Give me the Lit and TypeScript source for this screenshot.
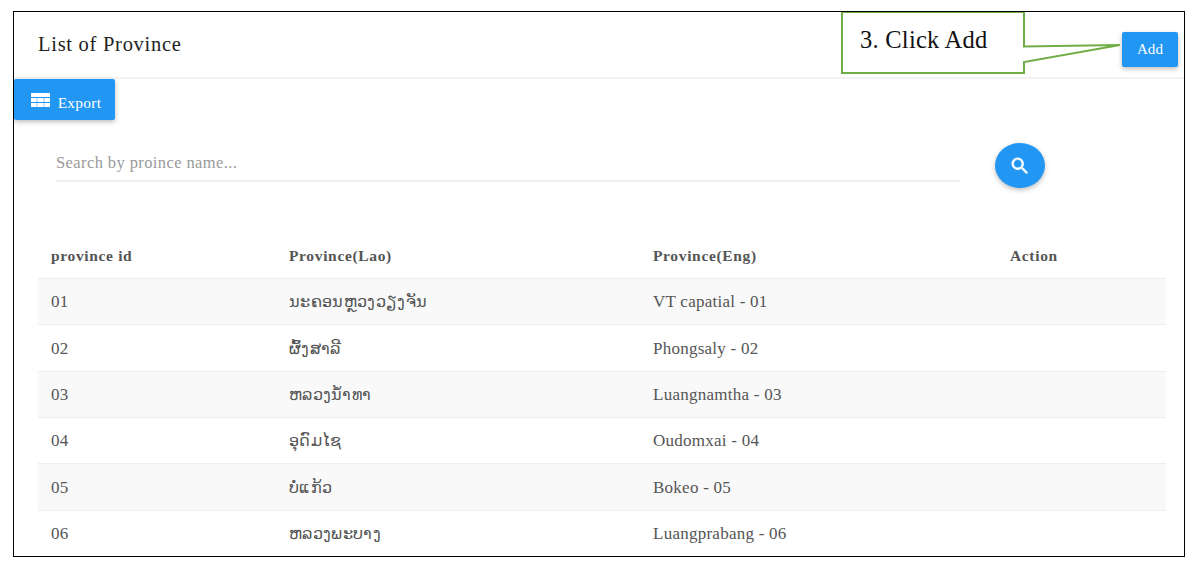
import { LitElement, html, css } from "lit";
import { customElement } from "lit/decorators.js";

const rows = [
  ["01", "ນະຄອນຫຼວງວຽງຈັນ", "VT capatial - 01"],
  ["02", "ຜົ້ງສາລີ", "Phongsaly - 02"],
  ["03", "ຫລວງນ້ຳທາ", "Luangnamtha - 03"],
  ["04", "ອຸດົມໄຊ", "Oudomxai - 04"],
  ["05", "ບໍ່ແກ້ວ", "Bokeo - 05"],
  ["06", "ຫລວງພະບາງ", "Luangprabang - 06"],
];

@customElement("app-root")
export class AppRoot extends LitElement {
  static styles = css`
    :host {
      display: block;
      box-sizing: border-box;
      width: 1197px;
      height: 570px;
      padding: 11px 12px 13px 13px;
      background: #fff;
      font-family: "Liberation Serif", "Noto Sans", serif;
      color: #555;
    }
    .frame {
      position: relative;
      box-sizing: border-box;
      height: 546px;
      border: 1px solid #000;
      overflow: hidden;
    }
    .header {
      box-sizing: border-box;
      height: 67px;
      border-bottom: 2px solid #f3f3f3;
      display: flex;
      align-items: center;
      justify-content: space-between;
      padding: 0 6px 0 24px;
    }
    .title {
      font-size: 20.5px;
      letter-spacing: 0.72px;
      color: #222;
    }
    .btn {
      background: #2196f3;
      color: #fff;
      border-radius: 2px;
      box-shadow: 0 2px 5px rgba(0, 0, 0, 0.26);
      font-family: inherit;
      display: flex;
      align-items: center;
      justify-content: center;
      box-sizing: border-box;
    }
    .add {
      width: 56px;
      height: 35px;
      padding-top: 1px;
      font-size: 15px;
      letter-spacing: 0.1px;
      font-weight: 500;
      margin-top: 9px;
    }
    .export {
      width: 101px;
      height: 41px;
      padding-left: 3px;
      font-size: 15.5px;
      letter-spacing: 0.25px;
      gap: 8px;
    }
    .export span {
      position: relative;
      top: 3px;
    }
    .export svg {
      width: 19px;
      height: 14px;
      position: relative;
      top: 0;
    }
    .search {
      display: flex;
      align-items: flex-start;
      padding: 23px 0 0 42px;
    }
    .field {
      box-sizing: border-box;
      width: 904px;
      height: 39px;
      margin-right: 35px;
      border-bottom: 2px solid #eee;
      padding-top: 9.5px;
      font-size: 16.5px;
      letter-spacing: 0.4px;
      color: #9a9a9a;
    }
    .fab {
      width: 50px;
      height: 45px;
      border-radius: 50%;
      background: #2196f3;
      box-shadow: 0 2px 5px rgba(0, 0, 0, 0.26);
      display: flex;
      align-items: center;
      justify-content: center;
    }
    table {
      border-collapse: collapse;
      table-layout: fixed;
      width: 1128px;
      margin: 47px 0 0 24px;
    }
    th {
      height: 41px;
      text-align: left;
      padding: 0 0 2px 13px;
      font-size: 15.5px;
      letter-spacing: 0.65px;
      font-weight: 700;
      color: #555;
      vertical-align: middle;
    }
    td {
      height: 44.35px;
      padding: 1px 0 0 13px;
      border-top: 1px solid #eee;
      font-size: 17px;
      letter-spacing: 0.25px;
      color: #555;
    }
    tr.odd td {
      background: #f9f9f9;
    }
    td.lao {
      font-size: 16.3px;
      letter-spacing: 0.33px;
    }
    .callout {
      position: absolute;
      left: 827px;
      top: -1px;
      width: 290px;
      height: 64px;
    }
    .callout-text {
      position: absolute;
      left: 846px;
      top: 12px;
      font-size: 24.5px;
      letter-spacing: 0.25px;
      color: #111;
      line-height: 32px;
    }
  `;

  render() {
    return html`
      <div class="frame">
        <div class="header">
          <div class="title">List of Province</div>
          <div class="btn add">Add</div>
        </div>
        <div class="btn export">
          <svg viewBox="0 0 19 14" aria-hidden="true">
            <rect width="19" height="14" fill="#fff" />
            <path stroke="#2196f3" stroke-width="1" d="M0 4.5H19M0 9.5H19" />
            <path stroke="#2196f3" stroke-width="1" opacity="0.5" d="M6 5V14M13 5V14" />
          </svg>
          <span>Export</span>
        </div>
        <div class="search">
          <div class="field">Search by proince name...</div>
          <div class="fab">
            <svg width="22" height="22" viewBox="0 0 24 24" aria-hidden="true">
              <path
                fill="#fff"
                stroke="#fff"
                stroke-width="0.6"
                d="M15.5 14h-.79l-.28-.27A6.47 6.47 0 0 0 16 9.5 6.5 6.5 0 1 0 9.5 16c1.61 0 3.09-.59 4.23-1.57l.27.28v.79l5 4.99L20.49 19l-4.99-5zm-6 0C7.01 14 5 11.99 5 9.5S7.01 5 9.5 5 14 7.01 14 9.5 11.99 14 9.5 14z"
              />
            </svg>
          </div>
        </div>
        <table>
          <colgroup>
            <col style="width:238px" />
            <col style="width:364px" />
            <col style="width:357px" />
            <col />
          </colgroup>
          <thead>
            <tr>
              <th>province id</th>
              <th>Province(Lao)</th>
              <th>Province(Eng)</th>
              <th>Action</th>
            </tr>
          </thead>
          <tbody>
            ${rows.map(
              (r, i) => html`<tr class=${i % 2 === 0 ? "odd" : ""}>
                <td>${r[0]}</td>
                <td class="lao" lang="lo">${r[1]}</td>
                <td>${r[2]}</td>
                <td></td>
              </tr>`
            )}
          </tbody>
        </table>
        <svg class="callout" viewBox="0 0 290 64" aria-hidden="true">
          <path
            d="M1 1H183V35.5L279 34L183 51V62H1Z"
            fill="#fff"
            stroke="#70ad47"
            stroke-width="2"
          />
        </svg>
        <div class="callout-text">3. Click Add</div>
      </div>
    `;
  }
}
